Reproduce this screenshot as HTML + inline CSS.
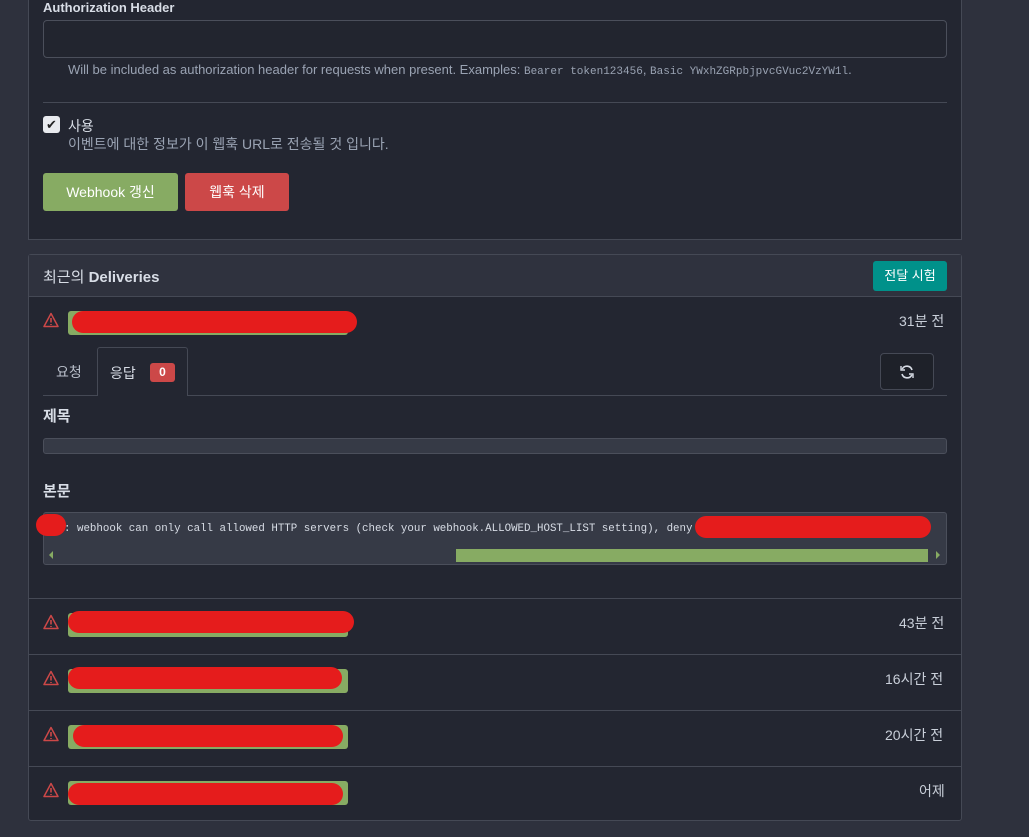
<!DOCTYPE html><html><head><meta charset="utf-8"><style>
body{margin:0;width:1029px;height:837px;background:#2e313d;font-family:"Liberation Sans","Noto Sans CJK KR",sans-serif;color:#d8dde6;position:relative;overflow:hidden;font-size:14px}
.a{position:absolute}
.panel{background:#232631;border:1px solid #454955;box-sizing:border-box}
.mono{font-family:"Liberation Mono","DejaVu Sans Mono",monospace}
.warn{width:18px;height:16px}
.green{background:#87ab63;border-radius:3px;height:24px;width:280px}
.red{background:#e51c1c;border-radius:13px;height:22px}
.hr{height:1px;background:#454955}
.time{color:#c9cfd9;font-size:14px}
</style></head><body>
<div class="a panel" style="left:28px;top:-5px;width:934px;height:245px;border-top:none"></div>
<div class="a" style="left:43px;top:0;font-weight:bold;font-size:13px">Authorization Header</div>
<div class="a" style="left:43px;top:20px;width:904px;height:38px;border:1px solid #4b4f5b;border-radius:4px;box-sizing:border-box;background:#22252f"></div>
<div class="a" style="left:68px;top:62px;color:#9aa3b3;font-size:13px">Will be included as authorization header for requests when present. Examples: <span class="mono" style="font-size:11px">Bearer token123456</span>, <span class="mono" style="font-size:11px">Basic YWxhZGRpbjpvcGVuc2VzYW1l</span>.</div>
<div class="a hr" style="left:43px;top:102px;width:904px"></div>
<div class="a" style="left:43px;top:116px;width:17px;height:17px;border-radius:3px;box-sizing:border-box;background:#e8eaee;color:#222;font-size:13px;line-height:17px;text-align:center">✔</div>
<div class="a" style="left:68px;top:116px;font-size:14px">사용</div>
<div class="a" style="left:68px;top:134px;color:#9aa3b3;font-size:14px">이벤트에 대한 정보가 이 웹훅 URL로 전송될 것 입니다.</div>
<div class="a" style="left:43px;top:173px;width:135px;height:38px;background:#87ab63;border-radius:3px;color:#fff;text-align:center;line-height:38px;font-size:14px">Webhook 갱신</div>
<div class="a" style="left:185px;top:173px;width:104px;height:38px;background:#cc4848;border-radius:3px;color:#fff;text-align:center;line-height:38px;font-size:14px">웹훅 삭제</div>

<div class="a panel" style="left:28px;top:254px;width:934px;height:567px;border-radius:3px"></div>
<div class="a" style="left:29px;top:255px;width:932px;height:41px;background:#2f323e;border-bottom:1px solid #454955"></div>
<div class="a" style="left:43px;top:266px;font-size:15px">최근의 <b>Deliveries</b></div>
<div class="a" style="left:873px;top:261px;width:74px;height:30px;background:#00918a;border-radius:3px;color:#fff;text-align:center;line-height:30px;font-size:13px">전달 시험</div>

<svg class="a warn" style="left:42px;top:312px" viewBox="0 0 16 16"><path d="M8 1.5L15 14.5H1Z" fill="none" stroke="#cc4848" stroke-width="1.5" stroke-linejoin="round"/><path d="M8 6v4.5M8 12v1" stroke="#cc4848" stroke-width="1.6"/></svg>
<div class="a green" style="left:68px;top:311px"></div><div class="a red" style="left:72px;top:311px;width:285px"></div>
<div class="a time" style="left:899px;top:311px">31분 전</div>

<div class="a hr" style="left:43px;top:395px;width:904px"></div>
<div class="a" style="left:56px;top:362px;color:#b9bfca">요청</div>
<div class="a" style="left:97px;top:347px;width:91px;height:49px;border:1px solid #454955;border-bottom:none;border-radius:3px 3px 0 0;box-sizing:border-box;background:#232631"></div>
<div class="a" style="left:110px;top:363px">응답</div>
<div class="a" style="left:150px;top:363px;width:25px;height:19px;background:#cc4848;border-radius:3px;color:#fff;font-weight:bold;font-size:12px;text-align:center;line-height:19px">0</div>
<div class="a" style="left:880px;top:353px;width:54px;height:37px;border:1px solid #454955;border-radius:4px;box-sizing:border-box;background:#1e2129"></div>
<svg class="a" style="left:899px;top:364px" width="16" height="16" viewBox="0 0 16 16"><path d="M13 6A5.3 5.3 0 0 0 3.2 5M3 10a5.3 5.3 0 0 0 9.8 1" fill="none" stroke="#d8dde6" stroke-width="1.6"/><path d="M2 2v4h4M14 14v-4h-4" fill="none" stroke="#d8dde6" stroke-width="1.4"/></svg>

<div class="a" style="left:43px;top:405px;font-weight:bold;font-size:15px">제목</div>
<div class="a" style="left:43px;top:438px;width:904px;height:16px;background:#363a46;border:1px solid #4b4f5b;border-radius:3px;box-sizing:border-box"></div>
<div class="a" style="left:43px;top:480px;font-weight:bold;font-size:15px">본문</div>
<div class="a" style="left:43px;top:512px;width:904px;height:53px;background:#363a46;border:1px solid #4b4f5b;border-radius:3px;box-sizing:border-box;overflow:hidden"></div>
<div class="a mono" style="left:64px;top:523px;font-size:10.8px;white-space:nowrap">: webhook can only call allowed HTTP servers (check your webhook.ALLOWED_HOST_LIST setting), deny</div>
<div class="a" style="left:36px;top:514px;width:30px;height:22px;background:#e51c1c;border-radius:12px"></div>
<div class="a red" style="left:695px;top:516px;width:236px"></div>
<div class="a" style="left:456px;top:549px;width:472px;height:13px;background:#87ab63"></div>
<div class="a" style="left:49px;top:551px;width:0;height:0;border-top:4px solid transparent;border-bottom:4px solid transparent;border-right:4px solid #87ab63"></div>
<div class="a" style="left:936px;top:551px;width:0;height:0;border-top:4px solid transparent;border-bottom:4px solid transparent;border-left:4px solid #87ab63"></div>

<div class="a hr" style="left:29px;top:598px;width:932px"></div>
<svg class="a warn" style="left:42px;top:614px" viewBox="0 0 16 16"><path d="M8 1.5L15 14.5H1Z" fill="none" stroke="#cc4848" stroke-width="1.5" stroke-linejoin="round"/><path d="M8 6v4.5M8 12v1" stroke="#cc4848" stroke-width="1.6"/></svg>
<div class="a green" style="left:68px;top:613px"></div><div class="a red" style="left:68px;top:611px;width:286px"></div>
<div class="a time" style="left:899px;top:613px">43분 전</div>

<div class="a hr" style="left:29px;top:654px;width:932px"></div>
<svg class="a warn" style="left:42px;top:670px" viewBox="0 0 16 16"><path d="M8 1.5L15 14.5H1Z" fill="none" stroke="#cc4848" stroke-width="1.5" stroke-linejoin="round"/><path d="M8 6v4.5M8 12v1" stroke="#cc4848" stroke-width="1.6"/></svg>
<div class="a green" style="left:68px;top:669px"></div><div class="a red" style="left:68px;top:667px;width:274px"></div>
<div class="a time" style="left:885px;top:669px">16시간 전</div>

<div class="a hr" style="left:29px;top:710px;width:932px"></div>
<svg class="a warn" style="left:42px;top:726px" viewBox="0 0 16 16"><path d="M8 1.5L15 14.5H1Z" fill="none" stroke="#cc4848" stroke-width="1.5" stroke-linejoin="round"/><path d="M8 6v4.5M8 12v1" stroke="#cc4848" stroke-width="1.6"/></svg>
<div class="a green" style="left:68px;top:725px"></div><div class="a red" style="left:73px;top:725px;width:270px"></div>
<div class="a time" style="left:885px;top:725px">20시간 전</div>

<div class="a hr" style="left:29px;top:766px;width:932px"></div>
<svg class="a warn" style="left:42px;top:782px" viewBox="0 0 16 16"><path d="M8 1.5L15 14.5H1Z" fill="none" stroke="#cc4848" stroke-width="1.5" stroke-linejoin="round"/><path d="M8 6v4.5M8 12v1" stroke="#cc4848" stroke-width="1.6"/></svg>
<div class="a green" style="left:68px;top:781px"></div><div class="a red" style="left:68px;top:783px;width:275px"></div>
<div class="a time" style="left:919px;top:781px">어제</div>
</body></html>
